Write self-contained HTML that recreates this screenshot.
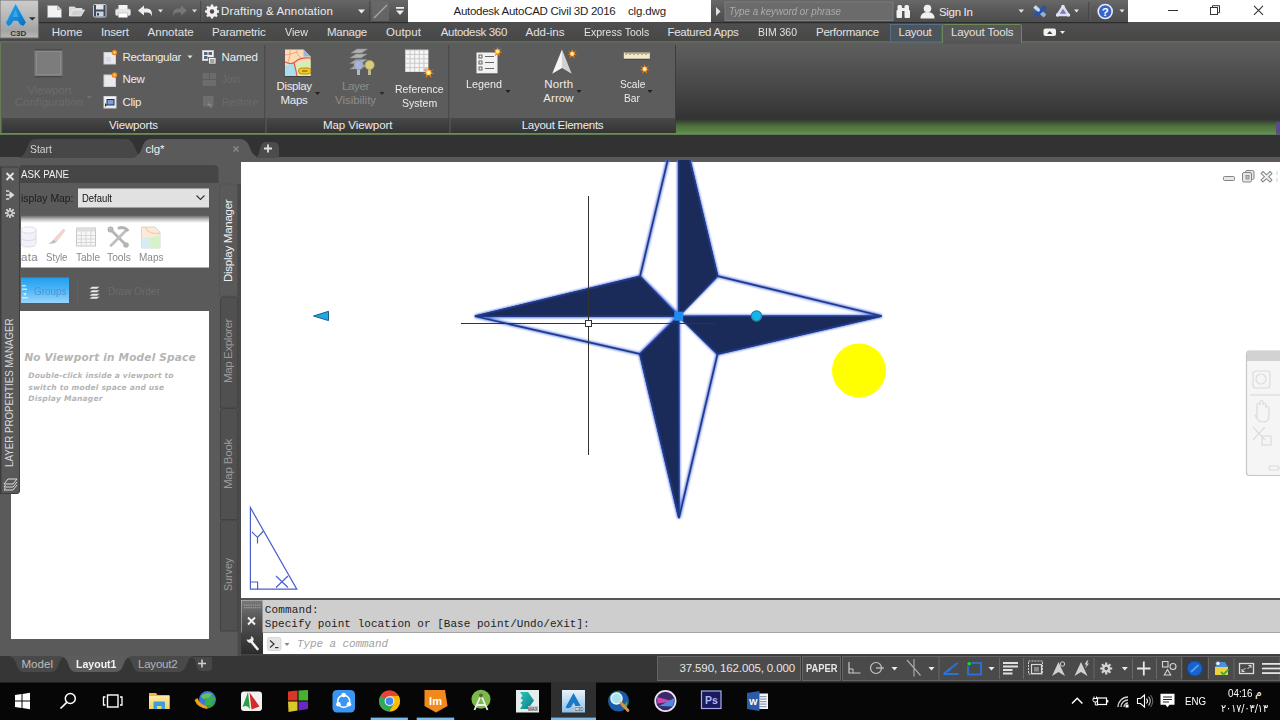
<!DOCTYPE html>
<html lang="en">
<head>
<meta charset="utf-8">
<title>Autodesk AutoCAD Civil 3D 2016 clg.dwg</title>
<style>
*{box-sizing:border-box;margin:0;padding:0}
html,body{width:1280px;height:720px;overflow:hidden;background:#3b3b3b}
body{font-family:"Liberation Sans","DejaVu Sans",sans-serif;font-size:12px;color:#e6e6e6;position:relative}
.abs{position:absolute}
.t{position:absolute;white-space:nowrap;line-height:1}
/* title bar */
#qat{left:0;top:0;width:408px;height:23px;background:linear-gradient(#666 0%,#585858 45%,#4c4c4c 100%)}
#title{left:408px;top:0;width:303px;height:22px;background:#fff}
#search{left:711px;top:0;width:417px;height:23px;background:linear-gradient(#686868 0%,#585858 45%,#4c4c4c 100%)}
#winctl{left:1128px;top:0;width:152px;height:22px;background:#fff}
#menurow{left:0;top:22px;width:1280px;height:20px;background:linear-gradient(#4f4f4f,#474747)}
#ribbon{left:0;top:41px;width:1280px;height:94px;background:linear-gradient(#5e6e56 0px,#5e6e56 1.2px,#5e5e5e 1.8px,#565656 18px,#474747 46px,#383838 70px,#333 78px,#3c4c34 81px,#4e733e 85px,#588245 90px,#6a9056 93px,#55664a 94px)}
#ribpanels{left:0;top:43px;width:676px;height:90px;background:#5c5c5c;border-left:1.5px solid #647b58}
#ribtitles{left:1.5px;top:118px;width:674.5px;height:15px;background:linear-gradient(#484848,#343434)}
#filetabs{left:0;top:135px;width:1280px;height:23px;background:#323232}
#canvas{left:241px;top:162px;width:1039px;height:438px;background:#fff}
#leftpal{left:0;top:157px;width:1280px;height:10px;background:#5a5a5a}
#cmd{left:241px;top:600px;width:1039px;height:33px;background:#cecece;border-bottom:1px solid #a4a4a4}
#cmdin{left:263px;top:633px;width:1017px;height:21px;background:#fff}
#status{left:0;top:654px;width:1280px;height:29px;background:#363636}
#taskbar{left:0;top:682px;width:1280px;height:38px;background:linear-gradient(#1e1e1e 0,#1e1e1e 1px,#060606 1px)}
</style>
</head>
<body>
<div id="qat" class="abs"></div>
<div id="title" class="abs"></div>
<div id="search" class="abs"></div>
<div id="winctl" class="abs"></div>
<div id="menurow" class="abs"></div>
<div id="ribbon" class="abs"></div>
<div id="ribpanels" class="abs"></div>
<div id="ribtitles" class="abs"></div>
<div id="filetabs" class="abs"></div>
<div id="leftpal" class="abs"></div>
<div id="canvas" class="abs"></div>
<svg class="abs" style="left:241px;top:160px" width="1039" height="440" viewBox="241 160 1039 440">
<defs><filter id="glow" x="-5%" y="-5%" width="110%" height="110%"><feGaussianBlur stdDeviation="1.1"/></filter></defs>
<rect x="241" y="160" width="1039" height="2" fill="#5a5a5a"/>

<rect x="241" y="598" width="1039" height="2" fill="#555"/>
<!-- star glow -->
<g filter="url(#glow)" fill="none" stroke="#5a78e8" stroke-width="3.2" stroke-linejoin="miter">
<path d="M678.7 114 L717.5 276 L881.5 316 L717.5 354 L679 518 L640 354 L475 316.3 L640 276.5 Z"/>
<path d="M678.7 114 V518 M475 316.3 H881.5 M640 276.5 L717.5 354 M717.5 276 L640 354"/>
</g>
<g fill="#1b2b59" stroke="#1f3a86" stroke-width="1.6" stroke-linejoin="miter">
<path d="M678.7 114 L717.5 276 L678.7 316.2 Z"/>
<path d="M475 316.3 L640 276.5 L678.7 316.2 Z"/>
<path d="M679 518 L640 354 L678.7 316.2 Z"/>
<path d="M881.5 316 L717.5 354 L678.7 316.2 Z"/>
</g>
<path d="M678.7 114 L717.5 276 L881.5 316 L717.5 354 L679 518 L640 354 L475 316.3 L640 276.5 Z" fill="none" stroke="#1f3a86" stroke-width="1.6"/>
<g stroke="#333" stroke-width="1"><line x1="588.5" y1="196" x2="588.5" y2="455"/><line x1="461" y1="323.5" x2="716" y2="323.5"/></g>
<rect x="585.5" y="320.5" width="6" height="6" fill="#fff" stroke="#333" stroke-width="1"/>
<line x1="678.7" y1="316" x2="716" y2="323.5" stroke="none"/>
<rect x="674.2" y="311.7" width="9" height="9" fill="#1e8cf0"/>
<circle cx="756.5" cy="316" r="5.2" fill="#17b4ee" stroke="#2a7f99" stroke-width="1.2"/>
<circle cx="859" cy="370.5" r="27" fill="#ffff00"/>
<path d="M313.5 316 L328.5 311.3 V320.6 Z" fill="#22a6e0" stroke="#1b5f8a" stroke-width="1"/>
<!-- UCS icon -->
<g fill="none" stroke="#4a60cc" stroke-width="1.2">
<path d="M250.4 507.6 V589.2 H296.8 Z"/>
<path d="M250.4 582 H257.6 V589.2"/>
<path d="M252 532 L257.5 537.5 L263.5 531 M257.5 537.5 V543.5"/>
<path d="M276 576 L288 587.5 M288 576 L276 587.5"/>
</g>
<!-- nav bar -->
<g>
<rect x="1246.5" y="351" width="40" height="124.5" rx="3" fill="#f5f5f5" stroke="#c6c6c6" stroke-width="1.2"/>
<path d="M1247 361 V354 a3 3 0 0 1 3 -3 H1281 V361 Z" fill="#d2d2d2"/>
<g fill="none" stroke="#dcdcdc" stroke-width="1.2">
<rect x="1253" y="371" width="17" height="17" rx="3"/><circle cx="1261" cy="379" r="5"/>
<line x1="1250" y1="395" x2="1280" y2="395"/>
<path d="M1257 417 v-12 a1.5 1.5 0 0 1 3 0 v-3 a1.5 1.5 0 0 1 3 0 v3 a1.5 1.5 0 0 1 3 0 v3 a1.5 1.5 0 0 1 3 0 v8 q0 6 -6 6 q-5 0 -8 -7 Z"/>
<path d="M1253 427 L1265 440 M1265 427 L1253 440"/><rect x="1262" y="436" width="9" height="9"/>
<rect x="1269" y="466" width="10" height="4" rx="2"/>
</g>
</g>
<!-- viewport controls -->
<g fill="#e6e6e6" stroke="#858585" stroke-width="1">
<rect x="1223.5" y="176.500" width="11" height="4" rx="1"/>
<rect x="1245.500" y="170.500" width="8.500" height="9" rx="1.500"/><rect x="1242.500" y="172.500" width="9" height="9.500" rx="1.500"/><rect x="1246" y="175.500" width="3" height="3.500" fill="#bbb" stroke-width="0.800"/>
</g>
<path d="M1263 173.500 L1270 180 M1270 173.500 L1263 180" stroke="#858585" stroke-width="3.800" stroke-linecap="square"/>
<path d="M1263 173.500 L1270 180 M1270 173.500 L1263 180" stroke="#f4f4f4" stroke-width="1.800" stroke-linecap="square"/>
<rect x="1276.500" y="171" width="1" height="4" fill="#a8e0e8"/><rect x="1276.500" y="178" width="1" height="4" fill="#a8e0e8"/>
</svg>

<div id="cmd" class="abs"></div>
<div id="cmdin" class="abs"></div>
<div id="status" class="abs"></div>
<div id="taskbar" class="abs"></div>
<svg class="abs" style="left:0;top:0" width="1280" height="160" viewBox="0 0 1280 160">
<defs>
<linearGradient id="appb" x1="0" y1="0" x2="0" y2="1"><stop offset="0" stop-color="#cdcdcd"/><stop offset="0.55" stop-color="#b2b2b2"/><stop offset="0.8" stop-color="#a4a4a4"/><stop offset="1" stop-color="#b8b8b8"/></linearGradient>
<linearGradient id="alogo" x1="0" y1="0" x2="1" y2="1"><stop offset="0" stop-color="#2aa6ec"/><stop offset="1" stop-color="#0c6cbc"/></linearGradient>
<radialGradient id="spark"><stop offset="0" stop-color="#fff6b0"/><stop offset="0.35" stop-color="#ffb030"/><stop offset="1" stop-color="#e06a10"/></radialGradient>
<linearGradient id="tabact" x1="0" y1="0" x2="0" y2="1"><stop offset="0" stop-color="#6a6a6a"/><stop offset="1" stop-color="#585858"/></linearGradient>
</defs>
<!-- dark separators in title bar -->
<rect x="0" y="22" width="408" height="1.2" fill="#2c2c2c"/>
<rect x="711" y="22" width="417" height="1.2" fill="#2c2c2c"/>
<!-- app button -->
<rect x="0" y="0" width="38.5" height="38" fill="url(#appb)"/>
<rect x="0" y="0" width="38.500" height="38" fill="none" stroke="#6e6e6e" stroke-width="1"/>
<path d="M15.600 3.700 L26.200 22.500 L23.500 26.300 L20 25 L17.600 21 H13.600 L11 25 L8 26.500 L5.600 22.800 Z" fill="url(#alogo)" stroke="#7cc8f4" stroke-width="0.600"/>
<path d="M15.600 9.500 L18.600 17 H12.600 Z" fill="#4cc0f8" opacity="0.550"/>
<text x="18.300" y="35.700" font-size="8" font-weight="bold" fill="#333" text-anchor="middle" font-family="Liberation Sans, sans-serif">C3D</text>
<path d="M29 17.200 h6.600 l-3.300 3.300 Z" fill="#2d2d2d"/>
<!-- QAT icons -->
<g>
<path d="M47.500 5.500 h10 l4 4 v8 h-14 Z" fill="#f2f2f2" stroke="#9a9a9a" stroke-width="0.8"/><path d="M57.500 5.500 v4 h4" fill="#cfcfcf" stroke="#9a9a9a" stroke-width="0.6"/>
<path d="M69.500 16 v-9 h5 l1.500 1.500 h6 v2" fill="#d8d8d8" stroke="#eee" stroke-width="0.8"/><path d="M69.500 16 l3.500 -6 h11.500 l-3.500 6 Z" fill="#cfcfcf" stroke="#f0f0f0" stroke-width="0.8"/>
<rect x="93.500" y="4.500" width="12.500" height="12.500" rx="1" fill="#3c4a60" stroke="#c8ccd4" stroke-width="1"/><rect x="96" y="5" width="7.500" height="4.500" fill="#e4e6ea"/><rect x="96" y="11.500" width="7.500" height="5" fill="#cfd3da"/><rect x="97" y="13" width="2" height="2.500" fill="#3c4a60"/>
<rect x="115.500" y="9" width="15" height="6.500" rx="1.500" fill="#e6e6e6" stroke="#bdbdbd" stroke-width="0.6"/><rect x="118.500" y="5" width="9" height="4.500" fill="#f4f4f4"/><rect x="118.500" y="13" width="9" height="4.500" fill="#fff" stroke="#aaa" stroke-width="0.5"/>
<path d="M138 10.500 l6 -5 v3 h3 q5 0 5 6 v2 q-1 -4 -5 -4 h-3 v3 Z" fill="#ededed"/>
<path d="M158 9.500 h5 l-2.500 3 Z" fill="#e6e6e6"/>
<path d="M187 10.500 l-6 -5 v3 h-3 q-5 0 -5 6 v2 q1 -4 5 -4 h3 v3 Z" fill="#777"/>
<path d="M192 9.500 h5 l-2.500 3 Z" fill="#dcdcdc"/>
<rect x="200.500" y="1" width="1" height="21" fill="#3a3a3a"/><rect x="201.500" y="1" width="1" height="21" fill="#666"/>
<g transform="translate(212,11.500)"><circle r="4.200" fill="none" stroke="#f2f2f2" stroke-width="2.600"/><g stroke="#f2f2f2" stroke-width="2.400"><line x1="0" y1="-7" x2="0" y2="7"/><line x1="-7" y1="0" x2="7" y2="0"/><line x1="-5" y1="-5" x2="5" y2="5"/><line x1="-5" y1="5" x2="5" y2="-5"/></g><circle r="3.900" fill="#f2f2f2"/><circle r="2.200" fill="#4c4c4c"/></g>
<path d="M358 9.500 h7 l-3.500 4 Z" fill="#eee"/>
<rect x="369.500" y="1" width="1" height="21" fill="#3a3a3a"/><rect x="370.500" y="1" width="1" height="21" fill="#646464"/>
<rect x="372" y="1.500" width="17" height="19.500" fill="#6c6c6c" opacity="0.700"/><line x1="374" y1="18" x2="387" y2="5" stroke="#a4a4a4" stroke-width="1.400"/>
<rect x="396" y="7" width="8" height="1.800" fill="#eee"/><path d="M396 10.500 h8 l-4 4.500 Z" fill="#eee"/>
</g>
<!-- search -->
<path d="M716 7 l4.500 4.500 l-4.500 4.500 Z" fill="#e0e0e0"/>
<rect x="725" y="2" width="168" height="18.500" fill="#6b6b6b" stroke="#7c7c7c" stroke-width="1"/>
<g fill="#f0f0f0"><rect x="897.500" y="5" width="4.500" height="6" rx="1.500"/><rect x="904.500" y="5" width="4.500" height="6" rx="1.500"/><rect x="896.500" y="10" width="5.500" height="8" rx="1"/><rect x="904.500" y="10" width="5.500" height="8" rx="1"/><rect x="901" y="8" width="4.500" height="3"/></g>
<g fill="#f0f0f0"><circle cx="927.500" cy="8.500" r="3.800"/><path d="M920.500 18.500 q0 -6.500 7 -6.500 q7 0 7 6.500 Z"/></g>
<path d="M1018.500 9.500 h5.500 l-2.750 3.200 Z" fill="#e8e8e8"/>
<g fill="none"><path d="M1034.500 6.500 L1045 16" stroke="#8ab4e8" stroke-width="4"/><path d="M1045.500 6.500 L1035 16" stroke="#2c52a8" stroke-width="4"/><path d="M1034.500 6.500 L1039.500 11" stroke="#cfe0f6" stroke-width="2.400"/></g>
<path d="M1063 6.500 L1057.500 15 H1068.500 Z" fill="#7a7ab8" stroke="#dcdcf2" stroke-width="2.400" stroke-linejoin="round"/><circle cx="1063" cy="6.500" r="1.700" fill="#e4e4f6"/><circle cx="1057.500" cy="15" r="1.700" fill="#e4e4f6"/><circle cx="1068.500" cy="15" r="1.700" fill="#e4e4f6"/>
<path d="M1074 9.500 h5 l-2.500 3 Z" fill="#e8e8e8"/>
<rect x="1088.500" y="2" width="1" height="19" fill="#3a3a3a"/><rect x="1089.500" y="2" width="1" height="19" fill="#646464"/>
<circle cx="1105.200" cy="11.500" r="7" fill="#3a62c8" stroke="#e8ecf8" stroke-width="1.600"/>
<text x="1105.200" y="15.600" font-size="11.500" font-weight="bold" fill="#fff" text-anchor="middle" font-family="Liberation Sans, sans-serif">?</text>
<path d="M1119.500 9.500 h5 l-2.500 3 Z" fill="#e8e8e8"/>
<!-- window controls -->
<rect x="1168" y="10" width="10" height="1" fill="#333"/>
<rect x="1210.500" y="7.500" width="7" height="7" fill="#fff" stroke="#333" stroke-width="1"/><path d="M1212.500 7.500 v-1.800 h7 v7 h-2" fill="none" stroke="#333" stroke-width="1"/>
<path d="M1254 5.800 L1263 14.800 M1263 5.800 L1254 14.800" stroke="#333" stroke-width="1.100"/>
<!-- menu row tabs -->
<rect x="890.500" y="24.500" width="51.500" height="17.500" fill="#4c545c" stroke="#56708a" stroke-width="1"/>
<path d="M942.500 43 V25.500 q0 -1 1 -1 H1020.500 q1 0 1 1 V43" fill="#585858" stroke="#6b8a5a" stroke-width="1"/>
<rect x="943" y="41" width="78" height="3" fill="#555"/>
<rect x="1043.500" y="28.500" width="12.500" height="7.500" rx="2" fill="#f2f2f2"/><path d="M1047 34 l2.750 -3 l2.750 3 Z" fill="#444"/>
<path d="M1060 31 h5 l-2.500 3 Z" fill="#e8e8e8"/>
<!-- ribbon panel separators -->
<rect x="264.500" y="45" width="1" height="88" fill="#3c3c3c"/><rect x="265.500" y="45" width="1" height="88" fill="#5e5e5e"/>
<rect x="448.500" y="45" width="1" height="88" fill="#3c3c3c"/><rect x="449.500" y="45" width="1" height="88" fill="#5e5e5e"/>
<rect x="675" y="45" width="1" height="88" fill="#3c3c3c"/>


<rect x="1276" y="122" width="4" height="12.500" fill="#5a4a8a"/>
<!-- ribbon icons -->
<g id="sparkdef">
</g>
<!-- viewport config big icon -->
<rect x="34.5" y="49" width="28" height="28" fill="#7c7c7c"/>
<rect x="34.500" y="49" width="28" height="1.500" fill="#4a4a4a"/><rect x="34.500" y="76" width="28" height="1.500" fill="#4a4a4a"/>
<rect x="36.500" y="51.500" width="24" height="23" fill="none" stroke="#8a8a8a" stroke-width="1"/>
<path d="M87 96 h5 l-2.500 3 Z" fill="#707070"/>
<!-- small icons col1 -->
<rect x="104" y="52.500" width="11.500" height="11.500" fill="#e9e9ee" stroke="#cfcfd6" stroke-width="1"/><rect x="106" y="57" width="5" height="5" fill="#d4dcec"/>
<circle cx="114.500" cy="52.500" r="2.800" fill="url(#spark)"/>
<rect x="104" y="75" width="11.500" height="11.500" fill="#e9e9ee" stroke="#cfcfd6" stroke-width="1"/>
<circle cx="114.500" cy="75" r="2.800" fill="url(#spark)"/>
<rect x="104" y="96.500" width="12" height="11.500" fill="#f4f4f6" stroke="#d6d6da" stroke-width="1"/><rect x="107" y="99.500" width="7" height="5.500" fill="#7a9fd6" stroke="#1d2c52" stroke-width="1"/><path d="M107 105 h-1.500 m0 -1.500 v3" stroke="#1d2c52" stroke-width="1" fill="none"/>
<path d="M187.500 55.500 h5 l-2.500 3 Z" fill="#e6e6e6"/>
<!-- col2 -->
<rect x="202.500" y="50.500" width="11" height="10" fill="#f0f0f0" stroke="#d0d0d0" stroke-width="0.800"/><g fill="#5a6478"><rect x="204" y="52" width="3.500" height="3"/><rect x="208.500" y="52" width="3.500" height="3"/><rect x="204" y="56" width="3.500" height="3"/></g>
<rect x="208.500" y="57.500" width="7.500" height="6.500" fill="#f4f4f4" stroke="#555" stroke-width="0.800"/><rect x="210" y="59.500" width="4.500" height="1" fill="#555"/><rect x="210" y="61.500" width="4.500" height="1" fill="#555"/>
<g fill="#6c6c6c"><rect x="202.500" y="73" width="6.500" height="6"/><rect x="210" y="73" width="6" height="6"/><rect x="202.500" y="80" width="13.500" height="6"/></g>
<rect x="203" y="96" width="10.500" height="10.500" fill="#6e6e6e"/><path d="M211 108 v-3.500 h-3 m1.500 -1.500 l-1.800 1.600 l1.800 1.600" stroke="#8a8a8a" stroke-width="1" fill="none"/>
<!-- Display maps -->
<path d="M285 49.500 H303.500 L310.500 56.500 V76 H285 Z" fill="#fbdcb8"/>
<path d="M285 66 L293 63 L297 76 H285 Z" fill="#a8dff0"/>
<path d="M297 76 L294 64.500 L310.500 60 V76 Z" fill="#d8eeb0"/>
<g fill="none" stroke="#e0524a" stroke-width="1.100"><path d="M285 62 Q292 65 295 62 Q300 57 310 58"/><path d="M294 63 Q296 70 297 76"/></g>
<g fill="none" stroke="#eea070" stroke-width="0.900"><path d="M290 49.500 Q291 56 288 62"/><path d="M297 49.500 Q296 55 301 57.500"/><path d="M285 55 Q292 54 297 52"/></g>
<path d="M303.500 49.500 V56.500 H310.500 Z" fill="#9cb4e0"/>
<rect x="298.500" y="68" width="12.500" height="6" rx="3" fill="#f6c820" stroke="#a87c10" stroke-width="0.800"/><rect x="302" y="70.200" width="5.500" height="1.600" fill="#a87c10"/>
<rect x="284.500" y="76" width="26.500" height="1" fill="#2a2a2a" opacity="0.600"/>
<path d="M315 92 h5 l-2.500 3 Z" fill="#1e1e1e"/>
<!-- layer visibility -->
<g fill="#b0b0b0" stroke="#8c8c8c" stroke-width="0.600"><path d="M350 69 l6 -4 h11 l-6 4 Z"/><path d="M350 63.500 l6 -4 h11 l-6 4 Z"/><path d="M350 58 l6 -4 h11 l-6 4 Z"/><path d="M351 53 l6 -4 h10.500 l-6 4 Z"/></g>
<rect x="357" y="67" width="3" height="8" fill="#b4b8c4"/><circle cx="358.600" cy="65" r="4.600" fill="#a8b4d4" stroke="#8c96b4" stroke-width="0.800"/>
<rect x="368" y="67" width="3" height="8" fill="#bdb890"/><circle cx="369.600" cy="65" r="4.600" fill="#d8cc78" stroke="#b0a660" stroke-width="0.800"/>
<path d="M379.500 92 h5 l-2.500 3 Z" fill="#2a2a2a"/>
<!-- reference grid -->
<rect x="405" y="49.500" width="23.500" height="22.500" fill="#c9c9c9"/>
<g fill="#f6f6f6"><rect x="406" y="50.500" width="3.600" height="3.400"/><rect x="410.600" y="50.500" width="3.600" height="3.400"/><rect x="415.200" y="50.500" width="3.600" height="3.400"/><rect x="419.800" y="50.500" width="3.600" height="3.400"/><rect x="424.400" y="50.500" width="3.600" height="3.400"/>
<rect x="406" y="54.900" width="3.600" height="3.400"/><rect x="410.600" y="54.900" width="3.600" height="3.400"/><rect x="415.200" y="54.900" width="3.600" height="3.400"/><rect x="419.800" y="54.900" width="3.600" height="3.400"/><rect x="424.400" y="54.900" width="3.600" height="3.400"/>
<rect x="406" y="59.300" width="3.600" height="3.400"/><rect x="410.600" y="59.300" width="3.600" height="3.400"/><rect x="415.200" y="59.300" width="3.600" height="3.400"/><rect x="419.800" y="59.300" width="3.600" height="3.400"/><rect x="424.400" y="59.300" width="3.600" height="3.400"/>
<rect x="406" y="63.700" width="3.600" height="3.400"/><rect x="410.600" y="63.700" width="3.600" height="3.400"/><rect x="415.200" y="63.700" width="3.600" height="3.400"/><rect x="419.800" y="63.700" width="3.600" height="3.400"/><rect x="424.400" y="63.700" width="3.600" height="3.400"/>
<rect x="406" y="68.100" width="3.600" height="3.400"/><rect x="410.600" y="68.100" width="3.600" height="3.400"/><rect x="415.200" y="68.100" width="3.600" height="3.400"/><rect x="419.800" y="68.100" width="3.600" height="3.400"/></g>
<g transform="translate(428.600,72.500)"><path d="M0 -6 L1.300 -1.800 L5.200 -3.600 L2.200 -0.400 L6 1.200 L2 1.600 L3.200 5.600 L0 2.800 L-3.200 5.600 L-2 1.600 L-6 1.200 L-2.200 -0.400 L-5.200 -3.600 L-1.300 -1.800 Z" fill="#f07818"/><circle r="2.600" fill="#ffd860"/><circle r="1.200" fill="#fff8d0"/></g>
<!-- legend -->
<rect x="476.500" y="52.500" width="21" height="21" fill="#f2f2f2"/><rect x="476.500" y="73.500" width="21" height="1" fill="#333" opacity="0.500"/>
<g fill="none" stroke="#555" stroke-width="0.900"><rect x="479" y="55" width="3" height="3"/><rect x="479" y="61" width="3" height="3"/><rect x="479" y="67" width="3" height="3"/></g>
<g stroke="#666" stroke-width="1"><line x1="485" y1="56.500" x2="494" y2="56.500"/><line x1="485" y1="62.500" x2="494" y2="62.500"/><line x1="485" y1="68.500" x2="494" y2="68.500"/></g>
<g transform="translate(497.500,51.500)"><path d="M0 -5 L1.100 -1.500 L4.400 -3 L1.900 -0.300 L5 1 L1.700 1.400 L2.700 4.700 L0 2.400 L-2.700 4.700 L-1.700 1.400 L-5 1 L-1.900 -0.300 L-4.400 -3 L-1.100 -1.500 Z" fill="#f07818"/><circle r="2.200" fill="#ffd860"/><circle r="1" fill="#fff8d0"/></g>
<path d="M505.500 90 h5 l-2.500 3 Z" fill="#1e1e1e"/>
<!-- north arrow -->
<path d="M562 49.500 L552.200 73.700 L562 68 Z" fill="#f4f4f4"/><path d="M562 49.500 L571.700 73.700 L562 68 Z" fill="#d2d2d2"/>
<g transform="translate(572.200,53.700)"><path d="M0 -5 L1.100 -1.500 L4.400 -3 L1.900 -0.300 L5 1 L1.700 1.400 L2.700 4.700 L0 2.400 L-2.700 4.700 L-1.700 1.400 L-5 1 L-1.900 -0.300 L-4.400 -3 L-1.100 -1.500 Z" fill="#f07818"/><circle r="2.200" fill="#ffd860"/><circle r="1" fill="#fff8d0"/></g>
<path d="M576.500 90 h5 l-2.500 3 Z" fill="#1e1e1e"/>
<!-- scale bar -->
<rect x="623.800" y="52.500" width="26" height="6.300" fill="#f4e9cc"/><rect x="623.800" y="58.800" width="26" height="1" fill="#333" opacity="0.500"/>
<g stroke="#6a5a3a" stroke-width="0.800"><line x1="626" y1="52.500" x2="626" y2="55"/><line x1="628" y1="52.500" x2="628" y2="54"/><line x1="630" y1="52.500" x2="630" y2="55"/><line x1="632" y1="52.500" x2="632" y2="54"/><line x1="634" y1="52.500" x2="634" y2="55"/><line x1="636" y1="52.500" x2="636" y2="54"/><line x1="638" y1="52.500" x2="638" y2="55"/><line x1="640" y1="52.500" x2="640" y2="54"/><line x1="642" y1="52.500" x2="642" y2="55"/><line x1="644" y1="52.500" x2="644" y2="54"/><line x1="646" y1="52.500" x2="646" y2="55"/><line x1="648" y1="52.500" x2="648" y2="54"/></g>
<g transform="translate(644.700,69)"><path d="M0 -5 L1.100 -1.500 L4.400 -3 L1.900 -0.300 L5 1 L1.700 1.400 L2.700 4.700 L0 2.400 L-2.700 4.700 L-1.700 1.400 L-5 1 L-1.900 -0.300 L-4.400 -3 L-1.100 -1.500 Z" fill="#f07818"/><circle r="2.200" fill="#ffd860"/><circle r="1" fill="#fff8d0"/></g>
<path d="M647.500 90 h5 l-2.500 3 Z" fill="#1e1e1e"/>

<!-- file tabs -->
<path d="M18 158 Q24 156.500 27 148 Q29 139 36 139 H126 Q132 139 135 148 Q138 156.500 145 158 Z" fill="#474747"/>
<path d="M133 158 Q139 156.500 142 148 Q144 139 151 139 H240 Q247 139 250 148 Q253 156.500 260 158 Z" fill="#5a5a5a"/>
<path d="M256 158 Q259 155 260 149 Q261 142 266 142 H274 Q279 142 279 149 V158 Z" fill="#4c4c4c"/>
<path d="M233.500 146.500 l5 5 m0 -5 l-5 5" stroke="#8a8a8a" stroke-width="1.400"/>
<path d="M264 148.500 h8 m-4 -4 v8" stroke="#e0e0e0" stroke-width="1.800"/>
</svg>
<svg class="abs" style="left:0;top:160px" width="241" height="496" viewBox="0 160 241 496">
<defs>
<linearGradient id="grp" x1="0" y1="0" x2="0" y2="1"><stop offset="0" stop-color="#1f9ff0"/><stop offset="0.45" stop-color="#4ab4f6"/><stop offset="1" stop-color="#98d4fb"/></linearGradient>
<linearGradient id="shd" x1="0" y1="0" x2="0" y2="1"><stop offset="0" stop-color="#555"/><stop offset="0.5" stop-color="#b8b8b8"/><stop offset="1" stop-color="#fff"/></linearGradient>
</defs>
<rect x="0" y="160" width="241" height="7" fill="#5a5a5a"/>
<rect x="0" y="167" width="241" height="489" fill="#5a5a5a"/>
<!-- task pane header -->
<path d="M20 165 H214 Q218.500 165 218.500 169.500 V183 H20 Z" fill="#464646"/>
<!-- dropdown -->
<rect x="78" y="188.500" width="131" height="19" fill="#e1e1e1"/>
<path d="M196.500 195.500 l4 4 l4 -4" fill="none" stroke="#333" stroke-width="1.100"/>
<!-- white toolbar panel -->
<rect x="21" y="216" width="188" height="51.500" fill="#fff"/>
<rect x="21" y="215" width="188" height="8" fill="url(#shd)"/>
<!-- toolbar icons (faded) -->
<g opacity="0.550">
<path d="M21 230 v13 q0 4 7.500 4 q7.500 0 7.500 -4 v-13 Z" fill="#e6e6f4" stroke="#b4b4d0" stroke-width="0.800"/><ellipse cx="28.500" cy="230" rx="7.500" ry="3.200" fill="#f4f4fc" stroke="#b4b4d0" stroke-width="0.800"/><path d="M21 237 q0 3.500 7.500 3.500 q7.500 0 7.500 -3.500" fill="none" stroke="#b4b4d0" stroke-width="0.800"/>
<path d="M48.500 243.500 q3 -1 5 -4 l3 2.500 q-3 2.500 -8 1.500 Z" fill="#8a8a8a"/><path d="M54 239 L63.500 229 L65 230.500 L56.500 241.500 Z" fill="#f0b0a0" stroke="#c08878" stroke-width="0.500"/>
<rect x="76.500" y="228" width="19" height="18" fill="#f2f2f2" stroke="#999" stroke-width="1"/><rect x="76.500" y="228" width="19" height="3.500" fill="#c4c4c4"/><g stroke="#aaa" stroke-width="0.800"><line x1="76.500" y1="235.500" x2="95.500" y2="235.500"/><line x1="76.500" y1="239" x2="95.500" y2="239"/><line x1="76.500" y1="242.500" x2="95.500" y2="242.500"/><line x1="81.300" y1="231" x2="81.300" y2="246"/><line x1="86" y1="231" x2="86" y2="246"/><line x1="90.800" y1="231" x2="90.800" y2="246"/></g>
<g stroke-linecap="round" fill="none"><path d="M110.500 229.500 L126 245" stroke="#777" stroke-width="2.800"/><path d="M126.500 230 L111 245.500" stroke="#8a8a8a" stroke-width="2.600"/><path d="M119 228 q5 -1.500 8.500 2" stroke="#777" stroke-width="3"/><circle cx="110.500" cy="229.500" r="2.200" stroke="#777" stroke-width="1.600"/><circle cx="126" cy="245" r="2" stroke="#777" stroke-width="1.600"/></g>
<path d="M141.500 227 H155 L160 232 V248 H141.500 Z" fill="#fbd9b8" stroke="#b8b8b8" stroke-width="1"/><path d="M141.500 239 L149 237 L151 248 H141.500 Z" fill="#b4dcf0"/><path d="M151 248 L149 238 L160 235 V248 Z" fill="#b8e89c"/><path d="M145 227 q2 5 7 6 q4 1 8 0" fill="none" stroke="#f08070" stroke-width="0.900"/>
</g>
<!-- groups / draw order -->
<rect x="21" y="277.500" width="48" height="25.500" fill="url(#grp)"/>
<g fill="#d8eefc" opacity="0.900"><rect x="22" y="285" width="4" height="1.500"/><rect x="22" y="288.500" width="5" height="1.500"/><path d="M23 293 h4 l-2 3 Z"/><rect x="22" y="297" width="6" height="1.500"/></g>
<rect x="77" y="280" width="1" height="23" fill="#6e5f55"/>
<g fill="#e8e8e8" stroke="#555" stroke-width="0.500"><path d="M89 289 l3 -2.500 h8 l-3 2.500 Z"/><path d="M89 292.500 l3 -2.500 h8 l-3 2.500 Z"/><path d="M89 296 l3 -2.500 h8 l-3 2.500 Z"/><path d="M89 299 l3 -2.500 h8 l-3 2.500 Z"/></g>
<!-- list panel -->
<rect x="11" y="311" width="198" height="328" fill="#fff"/>
<!-- right vertical tabs -->
<path d="M219.500 296 V187 Q219.500 184 222.500 184 H234.500 Q237.500 184 237.500 187 V296 Z" fill="#5a5a5a" stroke="#505050" stroke-width="0.800"/>
<path d="M220.500 408 V300 Q220.500 297 223.500 297 H234.500 Q237.500 297 237.500 300 V408 Z" fill="#505050" stroke="#424242" stroke-width="1"/>
<path d="M220.500 519.500 V411.500 Q220.500 408.500 223.500 408.500 H234.500 Q237.500 408.500 237.500 411.500 V519.500 Z" fill="#505050" stroke="#424242" stroke-width="1"/>
<path d="M220.500 631 V523 Q220.500 520 223.500 520 H234.500 Q237.500 520 237.500 523 V631 Z" fill="#505050" stroke="#424242" stroke-width="1"/>
<rect x="237.600" y="184" width="3.400" height="472" fill="#4a4a4a"/>
<!-- left floating strip -->
<path d="M0 167 H17 Q19.500 167 19.500 169.500 V491 Q19.500 493.500 17 493.500 H0 Z" fill="#585858" stroke="#3e3e3e" stroke-width="1"/>
<rect x="0" y="167" width="1.500" height="326" fill="#3c3c3c"/>
<path d="M6.500 173 l7 7 m0 -7 l-7 7" stroke="#e4e4e4" stroke-width="1.900"/>
<path d="M6 191 h3 m-3 4 h4 m-4 4 h3" stroke="#dcdcdc" stroke-width="1.400" fill="none"/><path d="M9.500 191 L14.500 195 L9.500 199 Z" fill="#dcdcdc"/>
<g transform="translate(10,213)" stroke="#dcdcdc" stroke-width="1.700"><line x1="0" y1="-5" x2="0" y2="5"/><line x1="-5" y1="0" x2="5" y2="0"/><line x1="-3.600" y1="-3.600" x2="3.600" y2="3.600"/><line x1="-3.600" y1="3.600" x2="3.600" y2="-3.600"/><circle r="1.600" fill="#575757" stroke="none"/></g>
<g fill="none" stroke="#dcdcdc" stroke-width="1"><path d="M4 484 l4 -5 h9 l-4 5 Z"/><path d="M4 487 l1.500 -2 M13 487 l4 -5 M4 487 h9"/><path d="M4 490 l1.500 -2 M13 490 l4 -5 M4 490 h9"/></g>
</svg>
<svg class="abs" style="left:0;top:598px" width="1280" height="122" viewBox="0 598 1280 122">
<defs>
<linearGradient id="cmdl" x1="0" y1="0" x2="0" y2="1"><stop offset="0" stop-color="#787878"/><stop offset="0.35" stop-color="#555"/><stop offset="1" stop-color="#2b2b2b"/></linearGradient>
<linearGradient id="folder" x1="0" y1="0" x2="0" y2="1"><stop offset="0" stop-color="#ffe9a6"/><stop offset="1" stop-color="#f6cf5e"/></linearGradient>
<linearGradient id="teal" x1="0" y1="0" x2="1" y2="1"><stop offset="0" stop-color="#2cc4b8"/><stop offset="1" stop-color="#0a7e88"/></linearGradient>
<linearGradient id="acad" x1="0" y1="0" x2="0" y2="1"><stop offset="0" stop-color="#e8f2fa"/><stop offset="1" stop-color="#8cc0e8"/></linearGradient>
</defs>
<!-- command line left strip -->
<rect x="241.500" y="600.500" width="21" height="53.500" fill="url(#cmdl)"/>
<g fill="#9c9c9c"><rect x="244" y="604.500" width="1.300" height="1.300"/><rect x="246.200" y="604.500" width="1.300" height="1.300"/><rect x="248.400" y="604.500" width="1.300" height="1.300"/><rect x="250.600" y="604.500" width="1.300" height="1.300"/><rect x="252.800" y="604.500" width="1.300" height="1.300"/><rect x="255" y="604.500" width="1.300" height="1.300"/><rect x="257.200" y="604.500" width="1.300" height="1.300"/><rect x="259.400" y="604.500" width="1.300" height="1.300"/>
<rect x="244" y="607" width="1.300" height="1.300"/><rect x="246.200" y="607" width="1.300" height="1.300"/><rect x="248.400" y="607" width="1.300" height="1.300"/><rect x="250.600" y="607" width="1.300" height="1.300"/><rect x="252.800" y="607" width="1.300" height="1.300"/><rect x="255" y="607" width="1.300" height="1.300"/><rect x="257.200" y="607" width="1.300" height="1.300"/><rect x="259.400" y="607" width="1.300" height="1.300"/></g>
<path d="M248 617.500 l7 7 m0 -7 l-7 7" stroke="#f4f4f4" stroke-width="1.900"/>
<g stroke="#f0f0f0" stroke-linecap="round" fill="none"><path d="M250.500 640.500 L257.500 649" stroke-width="2.600"/><path d="M247 640 a3.200 3.200 0 1 0 4.500 -3.500 l-0.500 3 l-2.500 0.500 Z" fill="#f0f0f0" stroke-width="0.600"/></g>
<!-- input icon -->
<rect x="267.500" y="637.500" width="13.500" height="13" rx="2" fill="#e6e6e6" stroke="#d0d0d0" stroke-width="0.800"/>
<path d="M270 640.500 l4 3.500 l-4 3.500" fill="none" stroke="#3a3a3a" stroke-width="1.300"/><rect x="275" y="647" width="3.500" height="1.200" fill="#3a3a3a"/>
<path d="M284.500 643 h5 l-2.500 3 Z" fill="#8a8a8a"/>
<rect x="241" y="654" width="1039" height="1.500" fill="#444"/>
<!-- layout tabs -->
<path d="M8 656 Q14 657 16 663 Q18 672 24 672 H50 Q57 672 59 663 Q61 657 66 656 Z" fill="#494949"/>
<path d="M124 656 Q130 657 132 663 Q134 672 140 672 H178 Q185 672 187 663 Q189 657 194 656 Z" fill="#494949"/>
<path d="M60 656 Q66 657 68 663 Q70 672 76 672 H115 Q122 672 124 663 Q126 657 132 656 Z" fill="#5c5c5c"/>
<path d="M191 657 Q195 658 196 663 Q197 671 201 671 H208 Q212 671 212 667 V657 Z" fill="#474747"/>
<path d="M198 663.500 h8 m-4 -4 v8" stroke="#cfcfcf" stroke-width="1.600"/>
<!-- status bar -->
<rect x="657.500" y="656.500" width="143" height="24" fill="#4b4b4b" stroke="#646464" stroke-width="1"/>
<rect x="802.500" y="656.500" width="38" height="24" fill="#4b4b4b" stroke="#646464" stroke-width="1"/>
<rect x="842.500" y="656.500" width="437.500" height="24" fill="#4a4a4a" stroke="#646464" stroke-width="1"/>
<g fill="#686868"><rect x="938.500" y="657" width="1" height="23"/><rect x="999" y="658" width="1" height="21"/><rect x="1023" y="658" width="1" height="21"/><rect x="1093.500" y="658" width="1" height="21"/><rect x="1132" y="658" width="1" height="21"/><rect x="1156" y="658" width="1" height="21"/><rect x="1181" y="658" width="1" height="21"/><rect x="1208" y="658" width="1" height="21"/><rect x="1233.500" y="658" width="1" height="21"/></g>
<g fill="none" stroke="#c8c8c8" stroke-width="1.200"><path d="M849 662 V673 H860.500"/><path d="M849 669 h4 v4" stroke-width="1"/>
<circle cx="876" cy="668" r="5.500"/><path d="M876 668 h8" /><path d="M907 660 L920.500 675.500 M914 659 V676.500" stroke="#a8a8a8"/></g>
<path d="M891.500 667 h6 l-3 3.500 Z" fill="#ececec"/><path d="M928.500 667 h6 l-3 3.500 Z" fill="#ececec"/>
<path d="M943.500 674 L957.500 663 M943.500 674 H958.500" fill="none" stroke="#2d72dc" stroke-width="1.800"/><circle cx="949" cy="670" r="1.600" fill="#2d72dc"/>
<rect x="968" y="663" width="13" height="11.500" fill="none" stroke="#2d72dc" stroke-width="1.800"/><circle cx="969.200" cy="663.700" r="2.300" fill="#28c83c" stroke="#0d4a16" stroke-width="0.600"/>
<path d="M988.500 667 h6 l-3 3.500 Z" fill="#ececec"/>
<g fill="#e0e0e0"><rect x="1003" y="662" width="15" height="2"/><rect x="1003" y="665.500" width="15" height="2"/><rect x="1003" y="669" width="9.500" height="2"/><rect x="1003" y="672.500" width="9.500" height="2"/></g>
<rect x="1028.500" y="661" width="14" height="13" fill="none" stroke="#d0d0d0" stroke-width="1" stroke-dasharray="2 1"/><rect x="1031.500" y="664.500" width="10" height="9" fill="none" stroke="#d8d8d8" stroke-width="1.200"/><rect x="1034" y="667" width="5" height="4.500" fill="#8a8a8a"/>
<g fill="#d0d0d0"><path d="M1058.500 662 L1052 676 L1058.500 672 L1065 676 Z"/><circle cx="1062.500" cy="664" r="2.200" fill="none" stroke="#d0d0d0" stroke-width="1"/><path d="M1081 662 L1074.500 676 L1081 672 L1087.500 676 Z"/><path d="M1087 660.500 l-2.500 4 h2 l-1.500 4 l4 -5 h-2 l1.500 -3 Z"/></g>
<g transform="translate(1106.200,668.500)" stroke="#d4d4d4" stroke-width="2.200"><line x1="0" y1="-6" x2="0" y2="6"/><line x1="-6" y1="0" x2="6" y2="0"/><line x1="-4.200" y1="-4.200" x2="4.200" y2="4.200"/><line x1="-4.200" y1="4.200" x2="4.200" y2="-4.200"/><circle r="4" fill="#d4d4d4" stroke="none"/><circle r="1.700" fill="#4a4a4a" stroke="none"/></g>
<path d="M1121.800 667 h6 l-3 3.500 Z" fill="#ececec"/>
<path d="M1137 668.500 h13.500 M1143.800 661.500 v14" stroke="#e8e8e8" stroke-width="1.800" fill="none"/>
<g fill="none" stroke="#d4d4d4" stroke-width="1.100"><rect x="1162.500" y="661.500" width="5.500" height="5.500"/><circle cx="1173" cy="666.500" r="3"/><path d="M1167.500 669.500 l3.200 5.500 h-6.400 Z"/></g>
<rect x="1183" y="657" width="24.500" height="23" fill="#3c3c3c"/>
<circle cx="1194.800" cy="668.500" r="7.500" fill="#1863cc" stroke="#0f4aa0" stroke-width="1"/><path d="M1191.500 671.500 l6.500 -6" stroke="#5a9cf0" stroke-width="1.800" stroke-linecap="round"/>
<rect x="1215" y="667" width="13" height="8" fill="#f0d040"/><path d="M1215 667 l4 -5 h6 l3 5 Z" fill="#4a90d8"/><circle cx="1218" cy="663.500" r="2.200" fill="#f4f4f4" stroke="#2a6ab8" stroke-width="0.800"/><path d="M1221 672 l2.500 2.500 l5 -5" stroke="#38b038" stroke-width="1.800" fill="none"/>
<rect x="1239.500" y="663.500" width="14" height="10" fill="none" stroke="#dcdcdc" stroke-width="1.300"/><path d="M1242 671.500 l3.500 -3.500 m-3.500 1 v2.500 h2.500 M1251 665.500 l-3.500 3.500 m3.500 -1 v-2.500 h-2.500" stroke="#dcdcdc" stroke-width="1" fill="none"/>
<g fill="#e4e4e4"><rect x="1262" y="663" width="18" height="1.800"/><rect x="1262" y="667.600" width="18" height="1.800"/><rect x="1262" y="672.200" width="18" height="1.800"/></g>

<!-- taskbar -->
<rect x="551" y="682" width="45" height="38" fill="#2f2f2f"/>
<g fill="#7db9ea"><rect x="370.700" y="717.600" width="37.200" height="2.400"/><rect x="416.700" y="717.600" width="37.500" height="2.400"/><rect x="551" y="717.600" width="45" height="2.400"/></g>
<!-- windows logo -->
<g fill="#fff"><path d="M15 695 L21.500 694 V700.500 H15 Z"/><path d="M22.500 693.900 L30 692.800 V700.500 H22.500 Z"/><path d="M15 701.500 H21.500 V708 L15 707 Z"/><path d="M22.500 701.500 H30 V709.200 L22.500 708.100 Z"/></g>
<!-- search -->
<circle cx="70.300" cy="698.500" r="5" fill="none" stroke="#fff" stroke-width="1.500"/><path d="M66.800 702.300 L60.500 708.500" stroke="#fff" stroke-width="1.700"/>
<!-- task view -->
<rect x="107.500" y="695" width="10.500" height="12" fill="none" stroke="#fff" stroke-width="1.400"/><path d="M105.500 697 h-2 v8 h2 M120 697 h2 v8 h-2" fill="none" stroke="#fff" stroke-width="1.300"/>
<!-- folder -->
<path d="M149 693 h7 l1.500 2 h12 v14 h-20.500 Z" fill="#e8b84a"/><rect x="149" y="696" width="20.500" height="13" fill="url(#folder)"/><path d="M153.500 709 v-6.500 q0 -1 1 -1 h9.500 q1 0 1 1 v6.500 h-3.500 v-3 h-4.500 v3 Z" fill="#3aa0d8"/>
<!-- IDM -->
<circle cx="207.500" cy="699.500" r="8.500" fill="#3a78d8"/><path d="M201 696 q5 -5 11 -2 q-2 5 -7 5 q-3 0 -4 -3 Z" fill="#6ac060"/><path d="M203 706 q5 1 9 -3 q2 -2 3 -1 q-1 5 -7 6.500 q-3 0 -5 -2.500 Z" fill="#3c9c40"/>
<path d="M194.500 700 q3 8 13 9 l-1 -3 q-7 -2 -9 -8 Z" fill="#f0a020"/><path d="M205 697 h6 v-3 l6 5.500 l-6 5.500 v-3 h-6 Z" fill="#38b048" transform="rotate(140 210 700)"/>
<!-- faststone -->
<rect x="241" y="691.500" width="21" height="19.500" rx="3" fill="#f2f2f2"/><path d="M248 692 L242.500 707 Q247 704 250 709 Z" fill="#2e9c48"/><path d="M249.500 692.500 L259.500 706.500 L251.500 709.500 Z" fill="#d82828"/>
<!-- 4 squares -->
<path d="M288 691.500 L297.500 690.500 V700.500 H288 Z" fill="#d83828"/><path d="M298.500 690.400 L308 690 V700.500 H298.500 Z" fill="#48b030"/><path d="M288 701.500 H297.500 V710.500 L288.500 712 Z" fill="#d8c828"/><path d="M298.500 701.500 H308 V709 L298.500 710.400 Z" fill="#6a28c0"/>
<!-- share blue -->
<rect x="332.500" y="690" width="22.500" height="22.500" rx="4.500" fill="#3a96f0"/><circle cx="343.700" cy="701.200" r="6" fill="none" stroke="#fff" stroke-width="1.600"/><g fill="#fff"><circle cx="343.700" cy="695" r="2.300"/><circle cx="338.400" cy="704.300" r="2.300"/><circle cx="349" cy="704.300" r="2.300"/></g>
<!-- chrome -->
<g transform="translate(389.500,701.100)"><circle r="10.500" fill="#e84334"/><path d="M0 0 L-9.100 -5.250 A10.500 10.500 0 0 0 -0.200 10.500 L4.500 2.400 Z" fill="#34a853"/><path d="M0 0 L4.500 2.400 L-0.200 10.500 A10.500 10.500 0 0 0 9.100 -5.250 L0 -5.250 Z" fill="#fbbc05"/><path d="M-9.100 -5.250 A10.500 10.500 0 0 1 9.100 -5.250 H0 Z" fill="#e84334"/><circle r="4.900" fill="#fff"/><circle r="3.900" fill="#4285f4"/></g>
<!-- Im -->
<path d="M424.500 690 H445 L447.500 706 L436 712.500 L424.500 706 Z" fill="#f08a1c"/>
<text x="435.500" y="705" font-size="11" font-weight="bold" fill="#fff" text-anchor="middle" font-family="Liberation Sans, sans-serif">Im</text>
<!-- android studio -->
<circle cx="481" cy="699.300" r="9.500" fill="#7cb84a"/><path d="M481 695 L474.500 710 M481 695 L487.500 710 M477 705 H485" stroke="#f0f0f0" stroke-width="1.800" fill="none"/><circle cx="481" cy="695.500" r="2" fill="#4a6a3a"/>
<!-- 3ds max -->
<rect x="516" y="690" width="23" height="22.500" fill="#e4ecec"/><path d="M520 692 h8 l6 8.500 l-6 8.500 h-8 l2.500 -4 l-2 -2 l2.500 -2.500 l-2.500 -2.500 l2 -2 Z" fill="url(#teal)"/><rect x="528" y="706" width="10" height="5" fill="#c4c8c8"/>
<text x="533" y="710.500" font-size="4.500" fill="#444" text-anchor="middle" font-family="Liberation Sans, sans-serif">MAX</text>
<!-- autocad -->
<rect x="562" y="690" width="23" height="22.500" fill="url(#acad)"/><path d="M573.500 693 L565.500 707.500 Q568.500 709 571 707 L573.500 702.500 L576 707 Q578.500 709 581.500 707.500 Z" fill="#1a78c8"/><rect x="574" y="706" width="10" height="5" fill="#bcd8ec"/>
<text x="579" y="710.500" font-size="4.500" fill="#345" text-anchor="middle" font-family="Liberation Sans, sans-serif">C3D</text>
<!-- magnifier globe -->
<circle cx="618.500" cy="701" r="10.500" fill="#1a5aa8"/><path d="M610 697 q4 -6 10 -5 q-1 5 -5 6 q-3 1 -5 -1 Z" fill="#48a848"/><path d="M621 706 q4 -1 6 -5 q1 4 -2 8 Z" fill="#48a848"/><circle cx="616.500" cy="698.500" r="5.500" fill="#a8e0f0" stroke="#e8f4f8" stroke-width="1.500"/><path d="M621 703 L628 710.500" stroke="#e09040" stroke-width="2.800" stroke-linecap="round"/>
<!-- purple circle -->
<circle cx="665.400" cy="701" r="10.200" fill="#3a2a6a" stroke="#ece4f4" stroke-width="1.800"/><path d="M657 697 L674 701.500 L657.500 703.500 Z" fill="#c84ab0"/><path d="M659 706 L674.500 698 L673 706.500 Z" fill="#4a8ae0"/>
<!-- Ps -->
<rect x="701.500" y="691" width="19.500" height="17.500" fill="#1a1a5e" stroke="#a8acec" stroke-width="1.200"/>
<text x="711.300" y="704" font-size="10.500" font-weight="bold" fill="#b4b8f4" text-anchor="middle" font-family="Liberation Sans, sans-serif">Ps</text>
<!-- Word -->
<rect x="756" y="693.500" width="12" height="15.500" fill="#f4f4f4"/><g fill="#8a9ab8"><rect x="760" y="696" width="6.500" height="1.200"/><rect x="760" y="698.500" width="6.500" height="1.200"/><rect x="760" y="701" width="6.500" height="1.200"/><rect x="760" y="703.500" width="6.500" height="1.200"/><rect x="760" y="706" width="6.500" height="1.200"/></g>
<path d="M747 693 L759.500 691 V711 L747 709 Z" fill="#2a5aa8"/>
<text x="753.200" y="704.500" font-size="9" font-weight="bold" fill="#fff" text-anchor="middle" font-family="Liberation Sans, sans-serif">W</text>
<!-- tray -->
<path d="M1072 703.500 l5.200 -5.200 l5.200 5.200" fill="none" stroke="#fff" stroke-width="1.500"/>
<rect x="1097.500" y="698" width="9" height="6.500" fill="none" stroke="#fff" stroke-width="1.200"/><rect x="1107" y="700" width="1.300" height="2.500" fill="#fff"/><path d="M1094 696.500 v2 m2.500 -2 v2 M1093 698.500 h4.500 v2 q0 1.500 -2.250 1.500 q-2.250 0 -2.250 -1.500 Z M1095.250 702 v3 h2.500" fill="none" stroke="#fff" stroke-width="1"/>
<g fill="none" stroke="#d0d0d0" stroke-width="1.300"><path d="M1118 707 a10 10 0 0 1 10 -10"/><path d="M1121 707 a7 7 0 0 1 7 -7"/><path d="M1124 707 a4 4 0 0 1 4 -4"/></g><rect x="1125.500" y="704.500" width="3" height="3" fill="#fff"/>
<path d="M1137.500 698.500 h3 l4 -3.500 v12 l-4 -3.500 h-3 Z" fill="none" stroke="#fff" stroke-width="1.100"/><g fill="none" stroke-width="1.100"><path d="M1146.500 698.500 q2 2.500 0 5" stroke="#fff"/><path d="M1148.500 696.500 q3.500 4.500 0 9" stroke="#bbb"/><path d="M1150.500 695 q4.500 6 0 12" stroke="#666"/></g>
<path d="M1160.500 693.700 h14 v11 h-5 l-2 2.500 l-2 -2.500 h-5 Z" fill="#fff"/><g fill="#222"><rect x="1163" y="696.500" width="9" height="1"/><rect x="1163" y="699" width="9" height="1"/><rect x="1163" y="701.500" width="6" height="1"/></g>

</svg>

<span class="t" style='left:221px;top:4.6px;font-size:11.5px;color:#ececec;line-height:13.8px;letter-spacing:0.16px;'>Drafting &amp; Annotation</span>
<span class="t" style='left:453.5px;top:4.6px;font-size:11.5px;color:#1e1e1e;line-height:13.8px;letter-spacing:-0.27px;'>Autodesk AutoCAD Civil 3D 2016</span>
<span class="t" style='left:628px;top:4.6px;font-size:11.5px;color:#1e1e1e;line-height:13.8px;letter-spacing:-0.14px;'>clg.dwg</span>
<span class="t" style='left:729px;top:4.6px;font-size:11.5px;color:#ababab;line-height:13.8px;transform-origin:0 0;transform:scaleX(0.848);font-style:italic;'>Type a keyword or phrase</span>
<span class="t" style='left:939px;top:5.6px;font-size:11.5px;color:#ececec;line-height:13.8px;letter-spacing:-0.33px;'>Sign In</span>
<span class="t" style='left:51.8px;top:26.1px;font-size:11.5px;color:#e2e2e2;line-height:13.8px;'>Home</span>
<span class="t" style='left:101px;top:26.1px;font-size:11.5px;color:#e2e2e2;line-height:13.8px;letter-spacing:-0.16px;'>Insert</span>
<span class="t" style='left:147.5px;top:26.1px;font-size:11.5px;color:#e2e2e2;line-height:13.8px;letter-spacing:0.03px;'>Annotate</span>
<span class="t" style='left:212px;top:26.1px;font-size:11.5px;color:#e2e2e2;line-height:13.8px;letter-spacing:-0.21px;'>Parametric</span>
<span class="t" style='left:285px;top:26.1px;font-size:11.5px;color:#e2e2e2;line-height:13.8px;transform-origin:0 0;transform:scaleX(0.930);'>View</span>
<span class="t" style='left:327px;top:26.1px;font-size:11.5px;color:#e2e2e2;line-height:13.8px;letter-spacing:-0.26px;'>Manage</span>
<span class="t" style='left:386px;top:26.1px;font-size:11.5px;color:#e2e2e2;line-height:13.8px;letter-spacing:0.08px;'>Output</span>
<span class="t" style='left:440.8px;top:26.1px;font-size:11.5px;color:#e2e2e2;line-height:13.8px;letter-spacing:-0.35px;'>Autodesk 360</span>
<span class="t" style='left:525.5px;top:26.1px;font-size:11.5px;color:#e2e2e2;line-height:13.8px;'>Add-ins</span>
<span class="t" style='left:583.8px;top:26.1px;font-size:11.5px;color:#e2e2e2;line-height:13.8px;transform-origin:0 0;transform:scaleX(0.913);'>Express Tools</span>
<span class="t" style='left:667.5px;top:26.1px;font-size:11.5px;color:#e2e2e2;line-height:13.8px;letter-spacing:-0.29px;'>Featured Apps</span>
<span class="t" style='left:757.5px;top:26.1px;font-size:11.5px;color:#e2e2e2;line-height:13.8px;transform-origin:0 0;transform:scaleX(0.911);'>BIM 360</span>
<span class="t" style='left:816px;top:26.1px;font-size:11.5px;color:#e2e2e2;line-height:13.8px;letter-spacing:-0.26px;'>Performance</span>
<span class="t" style='left:898.5px;top:26.1px;font-size:11.5px;color:#e2e2e2;line-height:13.8px;letter-spacing:-0.26px;'>Layout</span>
<span class="t" style='left:951px;top:26.1px;font-size:11.5px;color:#e2e2e2;line-height:13.8px;letter-spacing:-0.16px;'>Layout Tools</span>
<span class="t" style='left:122.4px;top:50.6px;font-size:11.5px;color:#ececec;line-height:13.8px;letter-spacing:-0.31px;'>Rectangular</span>
<span class="t" style='left:122.4px;top:73.1px;font-size:11.5px;color:#ececec;line-height:13.8px;letter-spacing:-0.31px;'>New</span>
<span class="t" style='left:122.4px;top:95.6px;font-size:11.5px;color:#ececec;line-height:13.8px;letter-spacing:-0.30px;'>Clip</span>
<span class="t" style='left:221.5px;top:50.6px;font-size:11.5px;color:#ececec;line-height:13.8px;letter-spacing:-0.16px;'>Named</span>
<span class="t" style='left:222px;top:73.1px;font-size:11.5px;color:#6b6b6b;line-height:13.8px;transform-origin:0 0;transform:scaleX(0.853);'>Join</span>
<span class="t" style='left:222px;top:95.6px;font-size:11.5px;color:#6b6b6b;line-height:13.8px;transform-origin:0 0;transform:scaleX(0.894);'>Restore</span>
<span class="t" style='left:27.4px;top:83.6px;font-size:11.5px;color:#6b6b6b;line-height:13.8px;letter-spacing:-0.03px;'>Viewport</span>
<span class="t" style='left:14.8px;top:96.3px;font-size:11.5px;color:#6b6b6b;line-height:13.8px;'>Configuration</span>
<span class="t" style='left:109px;top:119.1px;font-size:11.5px;color:#ececec;line-height:13.8px;letter-spacing:-0.17px;'>Viewports</span>
<span class="t" style='left:276.5px;top:80px;font-size:11.5px;color:#ececec;line-height:13.8px;letter-spacing:-0.36px;'>Display</span>
<span class="t" style='left:280.5px;top:94.1px;font-size:11.5px;color:#ececec;line-height:13.8px;letter-spacing:-0.28px;'>Maps</span>
<span class="t" style='left:342px;top:80px;font-size:11.5px;color:#8c8c8c;line-height:13.8px;letter-spacing:-0.36px;'>Layer</span>
<span class="t" style='left:335px;top:94.1px;font-size:11.5px;color:#8c8c8c;line-height:13.8px;letter-spacing:-0.03px;'>Visibility</span>
<span class="t" style='left:395.4px;top:82.8px;font-size:11.5px;color:#ececec;line-height:13.8px;transform-origin:0 0;transform:scaleX(0.916);'>Reference</span>
<span class="t" style='left:401.8px;top:96.9px;font-size:11.5px;color:#ececec;line-height:13.8px;transform-origin:0 0;transform:scaleX(0.918);'>System</span>
<span class="t" style='left:322.9px;top:119.1px;font-size:11.5px;color:#ececec;line-height:13.8px;letter-spacing:-0.04px;'>Map Viewport</span>
<span class="t" style='left:465.7px;top:77.9px;font-size:11.5px;color:#ececec;line-height:13.8px;transform-origin:0 0;transform:scaleX(0.936);'>Legend</span>
<span class="t" style='left:544.3px;top:77.9px;font-size:11.5px;color:#ececec;line-height:13.8px;letter-spacing:0.16px;'>North</span>
<span class="t" style='left:543.2px;top:92px;font-size:11.5px;color:#ececec;line-height:13.8px;letter-spacing:0.11px;'>Arrow</span>
<span class="t" style='left:619.6px;top:77.9px;font-size:11.5px;color:#ececec;line-height:13.8px;transform-origin:0 0;transform:scaleX(0.883);'>Scale</span>
<span class="t" style='left:624.4px;top:92px;font-size:11.5px;color:#ececec;line-height:13.8px;transform-origin:0 0;transform:scaleX(0.888);'>Bar</span>
<span class="t" style='left:521.7px;top:119.1px;font-size:11.5px;color:#ececec;line-height:13.8px;letter-spacing:-0.27px;'>Layout Elements</span>
<span class="t" style='left:30px;top:142.9px;font-size:11.5px;color:#d0d0d0;line-height:13.8px;transform-origin:0 0;transform:scaleX(0.905);'>Start</span>
<span class="t" style='left:145.6px;top:142.9px;font-size:11.5px;color:#f0f0f0;line-height:13.8px;letter-spacing:-0.07px;'>clg*</span>
<span class="t" style='left:21px;top:168.1px;font-size:11.5px;color:#f2f2f2;line-height:13.8px;transform-origin:0 0;transform:scaleX(0.847);'>ASK PANE</span>
<span class="t" style='left:20.5px;top:192.1px;font-size:11.5px;color:#1c1c1c;line-height:13.8px;transform-origin:0 0;transform:scaleX(0.902);'>isplay Map:</span>
<span class="t" style='left:82px;top:192.1px;font-size:11.5px;color:#111;line-height:13.8px;transform-origin:0 0;transform:scaleX(0.823);'>Default</span>
<span class="t" style='left:21px;top:250.6px;font-size:11.5px;color:#8a8a8a;line-height:13.8px;letter-spacing:0.33px;'>ata</span>
<span class="t" style='left:46px;top:250.6px;font-size:11.5px;color:#8a8a8a;line-height:13.8px;transform-origin:0 0;transform:scaleX(0.841);'>Style</span>
<span class="t" style='left:75.5px;top:250.6px;font-size:11.5px;color:#8a8a8a;line-height:13.8px;transform-origin:0 0;transform:scaleX(0.873);'>Table</span>
<span class="t" style='left:107px;top:250.6px;font-size:11.5px;color:#8a8a8a;line-height:13.8px;transform-origin:0 0;transform:scaleX(0.894);'>Tools</span>
<span class="t" style='left:139px;top:250.6px;font-size:11.5px;color:#8a8a8a;line-height:13.8px;transform-origin:0 0;transform:scaleX(0.871);'>Maps</span>
<span class="t" style='left:33.5px;top:284.6px;font-size:11.5px;color:#4e94cc;line-height:13.8px;transform-origin:0 0;transform:scaleX(0.862);'>Groups</span>
<span class="t" style='left:108px;top:285.1px;font-size:11.5px;color:#6c6c6c;line-height:13.8px;transform-origin:0 0;transform:scaleX(0.875);'>Draw Order</span>
<span class="t" style='left:24.4px;top:350.7px;font-size:10.5px;color:#b4b4b4;line-height:12.6px;letter-spacing:0.19px;font-family:"DejaVu Sans",sans-serif;font-style:italic;font-weight:bold;'>No Viewport in Model Space</span>
<span class="t" style='left:28.3px;top:371px;font-size:7.5px;color:#b4b4b4;line-height:9px;letter-spacing:0.20px;font-family:"DejaVu Sans",sans-serif;font-style:italic;font-weight:bold;'>Double-click inside a viewport to</span>
<span class="t" style='left:28.3px;top:382.5px;font-size:7.5px;color:#b4b4b4;line-height:9px;letter-spacing:0.20px;font-family:"DejaVu Sans",sans-serif;font-style:italic;font-weight:bold;'>switch to model space and use</span>
<span class="t" style='left:28.3px;top:393.5px;font-size:7.5px;color:#b4b4b4;line-height:9px;letter-spacing:0.26px;font-family:"DejaVu Sans",sans-serif;font-style:italic;font-weight:bold;'>Display Manager</span>
<span class="t" style='left:21.5px;top:657.9px;font-size:11.5px;color:#bdbdbd;line-height:13.8px;letter-spacing:0.03px;'>Model</span>
<span class="t" style='left:75.5px;top:657.9px;font-size:11.5px;color:#f4f4f4;line-height:13.8px;transform-origin:0 0;transform:scaleX(0.918);font-weight:bold;'>Layout1</span>
<span class="t" style='left:138px;top:657.9px;font-size:11.5px;color:#b4b4b4;line-height:13.8px;letter-spacing:-0.21px;'>Layout2</span>
<span class="t" style='left:264.8px;top:604.2px;font-size:11px;color:#222;line-height:13.2px;letter-spacing:0.15px;font-family:"Liberation Mono","DejaVu Sans Mono",monospace;'>Command:</span>
<span class="t" style='left:264.8px;top:617.9px;font-size:11px;color:#222;line-height:13.2px;letter-spacing:0.03px;font-family:"Liberation Mono","DejaVu Sans Mono",monospace;'>Specify point location or [Base point/Undo/eXit]:</span>
<span class="t" style='left:297px;top:637.9px;font-size:11px;color:#a2a2a2;line-height:13.2px;letter-spacing:-0.10px;font-family:"Liberation Mono","DejaVu Sans Mono",monospace;font-style:italic;'>Type a command</span>
<span class="t" style='left:679.5px;top:661.9px;font-size:11.5px;color:#e6e6e6;line-height:13.8px;letter-spacing:-0.13px;'>37.590, 162.005, 0.000</span>
<span class="t" style='left:805.5px;top:661.9px;font-size:11.5px;color:#e6e6e6;line-height:13.8px;transform-origin:0 0;transform:scaleX(0.812);font-weight:bold;'>PAPER</span>
<span class="t" style='left:1185px;top:694.6px;font-size:11.5px;color:#fff;line-height:13.8px;transform-origin:0 0;transform:scaleX(0.843);'>ENG</span>
<span class="t" style='left:1227.5px;top:686.6px;font-size:11.5px;color:#fff;line-height:13.8px;transform-origin:0 0;transform:scaleX(0.851);'>04:16</span>
<span class="t" style='left:1255px;top:685.9px;font-size:11px;color:#fff;line-height:13.2px;font-family:"DejaVu Sans",sans-serif;'>م</span>
<span class="t" style='left:1221px;top:702.4px;font-size:11px;color:#fff;line-height:13.2px;transform-origin:0 0;transform:scaleX(0.859);font-family:"DejaVu Sans",sans-serif;direction:ltr;unicode-bidi:bidi-override;'>٢٠١٧/٠٣/١٣</span>
<span class="t" style='left:222.1px;top:282px;font-size:11.5px;color:#f0f0f0;line-height:13.8px;letter-spacing:-0.26px;transform-origin:0 0;transform:rotate(-90deg);'>Display Manager</span>
<span class="t" style='left:222.1px;top:383.3px;font-size:11.5px;color:#9a9a9a;line-height:13.8px;letter-spacing:-0.37px;transform-origin:0 0;transform:rotate(-90deg);'>Map Explorer</span>
<span class="t" style='left:222.1px;top:489px;font-size:11.5px;color:#9a9a9a;line-height:13.8px;letter-spacing:-0.22px;transform-origin:0 0;transform:rotate(-90deg);'>Map Book</span>
<span class="t" style='left:222.1px;top:591px;font-size:11.5px;color:#9a9a9a;line-height:13.8px;transform-origin:0 0;transform:rotate(-90deg) scaleX(0.927);'>Survey</span>
<span class="t" style='left:3.4px;top:466.7px;font-size:11.5px;color:#d8d8d8;line-height:13.8px;transform-origin:0 0;transform:rotate(-90deg) scaleX(0.848);'>LAYER PROPERTIES MANAGER</span>
</body>
</html>
